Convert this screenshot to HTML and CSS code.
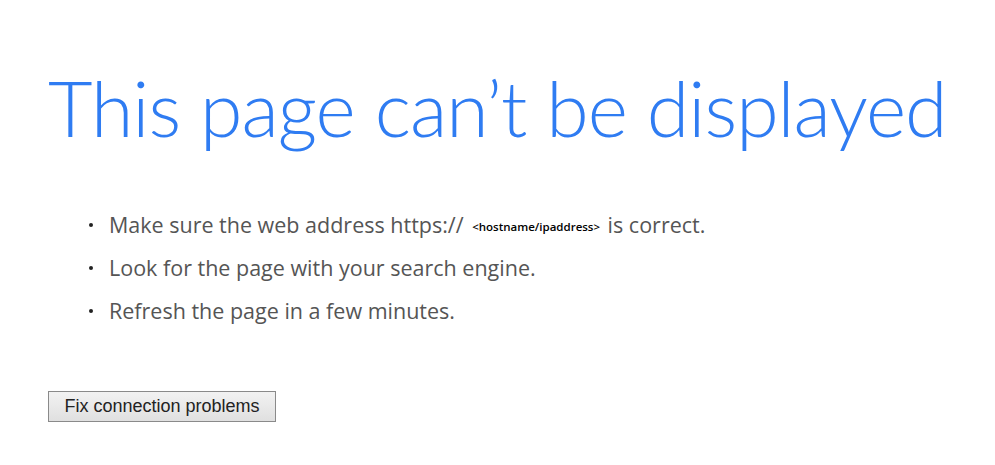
FILE: index.html
```html
<!DOCTYPE html>
<html>
<head>
<meta charset="utf-8">
<link rel="stylesheet" href="styles.css">
</head>
<body>
<div class="page">
  <h1 class="title">This page can’t be displayed</h1>
  <ul class="tips">
    <li>Make sure the web address https:// <span class="host">&lt;hostname/ipaddress&gt;</span> is correct.</li>
    <li>Look for the page with your search engine.</li>
    <li>Refresh the page in a few minutes.</li>
  </ul>
  <button class="fix">Fix connection problems</button>
</div>
</body>
</html>
```
FILE: styles.css
```css
html, body {
  margin: 0;
  padding: 0;
  background: #fff;
}
.page {
  padding: 57px 0 0 48px;
}
.title {
  margin: 0;
  font-family: "Lato", "Open Sans", sans-serif;
  font-weight: 300;
  font-size: 77px;
  line-height: 100px;
  letter-spacing: -1px;
  color: #2f7cf2;
  white-space: nowrap;
}
.tips {
  margin: 46px 0 0 0;
  padding: 0 0 0 61px;
  list-style: none;
  font-family: "Open Sans", sans-serif;
  font-weight: 400;
  font-size: 21.5px;
  color: #555;
}
.tips li {
  position: relative;
  height: 43px;
  line-height: 43px;
}
.tips li::before {
  content: "";
  position: absolute;
  left: -20px;
  top: 20px;
  width: 4px;
  height: 4px;
  border-radius: 50%;
  background: #222;
}
.host {
  font-size: 11.5px;
  font-weight: 600;
  color: #000;
  margin: 0 2px 0 3px;
  vertical-align: 2px;
}
.fix {
  margin-top: 59px;
  width: 228px;
  height: 31px;
  border: 1px solid #8a8a8a;
  background: linear-gradient(#f2f2f2, #e0e0e0);
  font-family: "Liberation Sans", Arial, sans-serif;
  font-size: 18px;
  color: #222;
  padding: 0;
}
```
